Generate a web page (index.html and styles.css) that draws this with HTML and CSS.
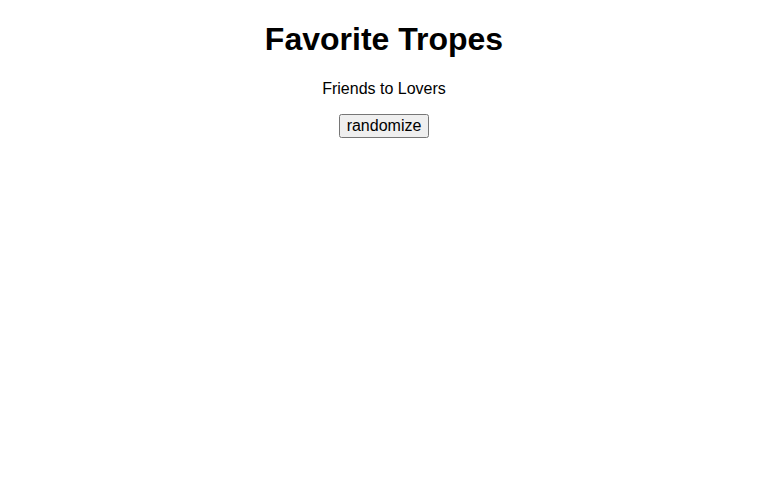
FILE: index.html
```html
<!DOCTYPE html>
<html lang="en">
<head>
    <meta charset="UTF-8">
    <meta name="viewport" content="width=device-width, initial-scale=1.0">
    <title>Favorite Tropes</title>
    <link rel="stylesheet" href="styles.css">
</head>
<body>
    <div class="app">
        <h1 class="title">Favorite Tropes</h1>
        <p class="trope" id="trope">Friends to Lovers</p>
        <button type="button" class="randomize" onclick="randomize()">randomize</button>
    </div>

    <script>
        const tropes = [
            'Friends to Lovers',
            'Enemies to Lovers',
            'Fake Dating',
            'Found Family',
            'Only One Bed',
            'Second Chance Romance'
        ];
        function randomize() {
            const el = document.getElementById('trope');
            el.textContent = tropes[Math.floor(Math.random() * tropes.length)];
        }
    </script>
</body>
</html>
```

FILE: styles.css
```css
body {
    font-family: 'Liberation Sans', Arial, sans-serif;
    color: black;
    background-color: white;
}
.app {
    text-align: center;
}
.title {
    font-size: 2em;
    margin-top: 13px;
    margin-bottom: 22px;
}
.randomize {
    font-family: 'Liberation Sans', Arial, sans-serif;
    font-size: 16px;
}
```
